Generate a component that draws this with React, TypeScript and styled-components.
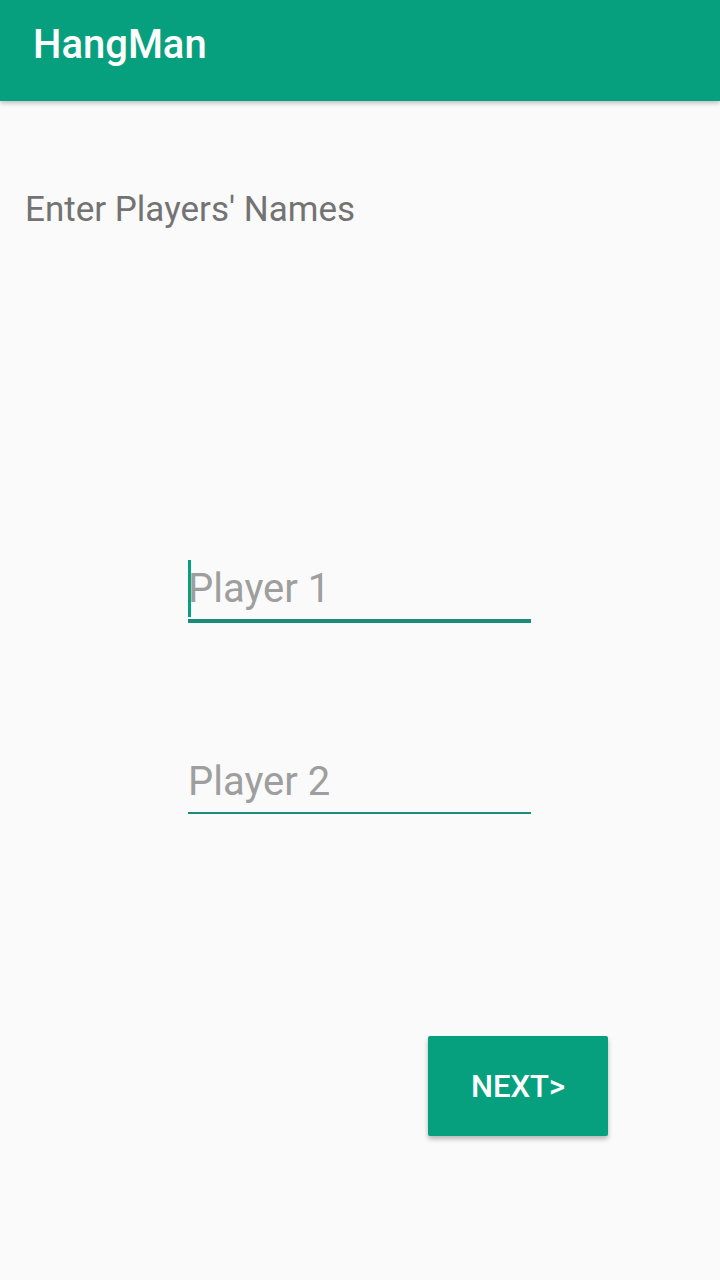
import React from 'react';
import styled, { createGlobalStyle } from 'styled-components';

const teal = '#07a07f';
const lineTeal = '#1a8c79';

const GlobalStyle = createGlobalStyle`
  html, body {
    margin: 0;
    padding: 0;
    background: #fafafa;
  }
  body {
    font-family: Roboto, 'Noto Sans', sans-serif;
  }
`;

const Screen = styled.div`
  width: 720px;
  min-height: 1280px;
  background: #fafafa;
  display: flex;
  flex-direction: column;
`;

const AppBar = styled.header`
  height: 101px;
  box-sizing: border-box;
  background: ${teal};
  padding: 25px 0 0 33px;
  box-shadow: 0 2px 5px rgba(0, 0, 0, 0.25);
`;

const Title = styled.h1`
  margin: 0;
  font-size: 40px;
  line-height: 40px;
  font-weight: 500;
  color: #ffffff;
`;

const Label = styled.div`
  margin: 93px 0 0 25px;
  font-size: 35px;
  line-height: 32px;
  color: #737373;
`;

const Form = styled.div`
  margin: 332px 0 0 188px;
  width: 343px;
  display: flex;
  flex-direction: column;
  gap: 131px;
`;

const Field = styled.div<{ $focused?: boolean }>`
  display: flex;
  align-items: flex-end;
  padding-top: ${p => (p.$focused ? 2 : 0)}px;
  padding-bottom: 2px;
  border-bottom: ${p => (p.$focused ? 4 : 2)}px solid ${lineTeal};
`;

const Cursor = styled.span`
  align-self: flex-start;
  width: 3px;
  height: 57px;
  background: ${teal};
  margin-right: -3px;
`;

const Hint = styled.span`
  font-size: 40px;
  line-height: 56px;
  color: #9e9e9e;
`;

const Actions = styled.div`
  margin: 222px 0 0 428px;
`;

const NextButton = styled.button`
  width: 180px;
  height: 100px;
  border: none;
  border-radius: 2px;
  background: ${teal};
  color: #ffffff;
  font-family: Roboto, sans-serif;
  font-size: 31px;
  font-weight: 500;
  box-shadow: 0 3px 5px rgba(0, 0, 0, 0.28);
  padding: 0;
`;

export default function App() {
  return (
    <>
      <GlobalStyle />
      <Screen>
        <AppBar>
          <Title>HangMan</Title>
        </AppBar>
        <Label>Enter Players' Names</Label>
        <Form>
          <Field $focused>
            <Cursor />
            <Hint>Player 1</Hint>
          </Field>
          <Field>
            <Hint>Player 2</Hint>
          </Field>
        </Form>
        <Actions>
          <NextButton>NEXT&gt;</NextButton>
        </Actions>
      </Screen>
    </>
  );
}
